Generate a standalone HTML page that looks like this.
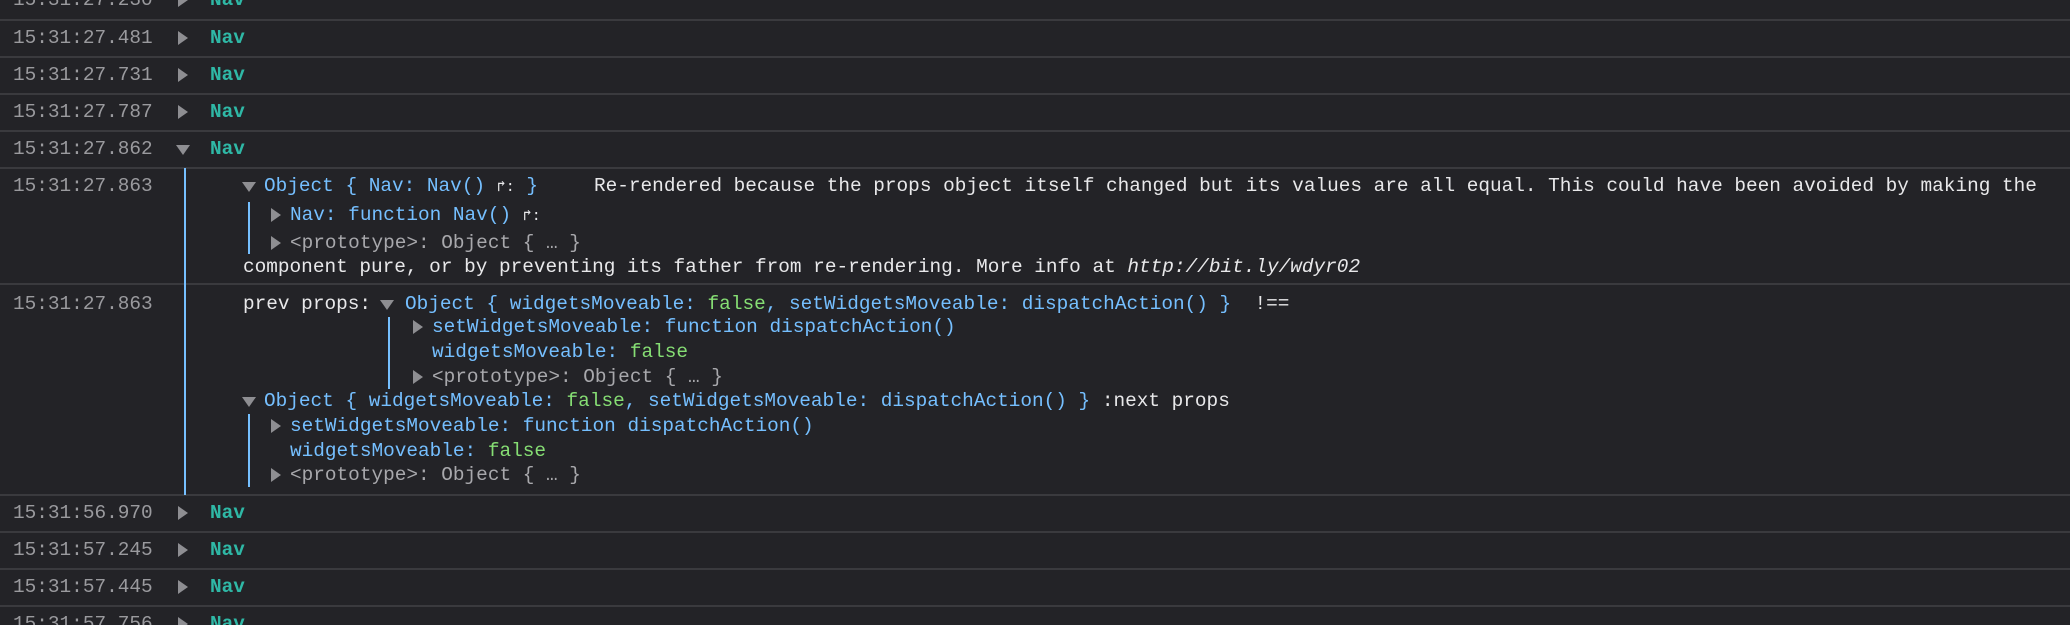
<!DOCTYPE html>
<html><head><meta charset="utf-8"><style>
html,body{margin:0;padding:0;background:#232327;width:2070px;height:625px;overflow:hidden;position:relative;font-family:"Liberation Mono","DejaVu Sans Mono",monospace;font-size:19.4px;}
.l{position:absolute;white-space:pre;height:24px;line-height:24px;color:#e8e8ea;}
.ts{color:#9a9a9e;left:13px;}
.nav{color:#2fb8a6;font-weight:bold;left:210px;}
.b{color:#75bfff}.g{color:#86de74}.gr{color:#a8a8ac}.w{color:#e8e8ea}
.sep{position:absolute;left:0;width:2070px;height:2px;background:#3a3a3e;}
.tr{position:absolute;width:0;height:0;border-top:7px solid transparent;border-bottom:7px solid transparent;border-left:10px solid #8e8e92;}
.td{position:absolute;width:0;height:0;border-left:7px solid transparent;border-right:7px solid transparent;border-top:10px solid #8e8e92;}
.vl{position:absolute;width:2px;background:#75bfff;}
</style></head><body>
<div class="sep" style="top:19px"></div>
<div class="sep" style="top:56px"></div>
<div class="sep" style="top:93px"></div>
<div class="sep" style="top:130px"></div>
<div class="sep" style="top:167px"></div>
<div class="sep" style="top:283px"></div>
<div class="sep" style="top:494px"></div>
<div class="sep" style="top:531px"></div>
<div class="sep" style="top:568px"></div>
<div class="sep" style="top:605px"></div>

<div class="l ts" style="top:-12px">15:31:27.230</div><div class="tr" style="left:178px;top:-7px"></div><div class="l nav" style="top:-12px">Nav</div>
<div class="l ts" style="top:26px">15:31:27.481</div><div class="tr" style="left:178px;top:31px"></div><div class="l nav" style="top:26px">Nav</div>
<div class="l ts" style="top:63px">15:31:27.731</div><div class="tr" style="left:178px;top:68px"></div><div class="l nav" style="top:63px">Nav</div>
<div class="l ts" style="top:100px">15:31:27.787</div><div class="tr" style="left:178px;top:105px"></div><div class="l nav" style="top:100px">Nav</div>
<div class="l ts" style="top:137px">15:31:27.862</div><div class="td" style="left:176px;top:145px"></div><div class="l nav" style="top:137px">Nav</div>

<div class="vl" style="left:184px;top:168px;height:327px"></div>

<div class="l ts" style="top:174px">15:31:27.863</div>
<div class="td" style="left:242px;top:182px"></div>
<div class="l b" style="left:264px;top:174px">Object { Nav: Nav() <span class="w" style="font-size:15px">↱:</span> }</div>
<div class="l w" style="left:594px;top:174px">Re-rendered because the props object itself changed but its values are all equal. This could have been avoided by making the</div>
<div class="vl" style="left:248px;top:202px;height:52px"></div>
<div class="tr" style="left:271px;top:208px"></div>
<div class="l b" style="left:290px;top:203px">Nav: function Nav() <span class="w" style="font-size:15px">↱:</span></div>
<div class="tr" style="left:271px;top:236px"></div>
<div class="l gr" style="left:290px;top:231px">&lt;prototype&gt;: Object { … }</div>
<div class="l w" style="left:243px;top:255px">component pure, or by preventing its father from re-rendering. More info at <i>http://bit.ly/wdyr02</i></div>

<div class="l ts" style="top:292px">15:31:27.863</div>
<div class="l w" style="left:243px;top:292px">prev props:</div>
<div class="td" style="left:380px;top:300px"></div>
<div class="l b" style="left:405px;top:292px">Object { widgetsMoveable: <span class="g">false</span>, setWidgetsMoveable: dispatchAction() }  <span class="w">!==</span></div>
<div class="vl" style="left:388px;top:317px;height:72px"></div>
<div class="tr" style="left:413px;top:320px"></div>
<div class="l b" style="left:432px;top:315px">setWidgetsMoveable: function dispatchAction()</div>
<div class="l b" style="left:432px;top:340px">widgetsMoveable: <span class="g">false</span></div>
<div class="tr" style="left:413px;top:370px"></div>
<div class="l gr" style="left:432px;top:365px">&lt;prototype&gt;: Object { … }</div>
<div class="td" style="left:242px;top:397px"></div>
<div class="l b" style="left:264px;top:389px">Object { widgetsMoveable: <span class="g">false</span>, setWidgetsMoveable: dispatchAction() } <span class="w">:next props</span></div>
<div class="vl" style="left:248px;top:414px;height:73px"></div>
<div class="tr" style="left:271px;top:419px"></div>
<div class="l b" style="left:290px;top:414px">setWidgetsMoveable: function dispatchAction()</div>
<div class="l b" style="left:290px;top:439px">widgetsMoveable: <span class="g">false</span></div>
<div class="tr" style="left:271px;top:468px"></div>
<div class="l gr" style="left:290px;top:463px">&lt;prototype&gt;: Object { … }</div>

<div class="l ts" style="top:501px">15:31:56.970</div><div class="tr" style="left:178px;top:506px"></div><div class="l nav" style="top:501px">Nav</div>
<div class="l ts" style="top:538px">15:31:57.245</div><div class="tr" style="left:178px;top:543px"></div><div class="l nav" style="top:538px">Nav</div>
<div class="l ts" style="top:575px">15:31:57.445</div><div class="tr" style="left:178px;top:580px"></div><div class="l nav" style="top:575px">Nav</div>
<div class="l ts" style="top:612px">15:31:57.756</div><div class="tr" style="left:178px;top:617px"></div><div class="l nav" style="top:612px">Nav</div>
</body></html>
